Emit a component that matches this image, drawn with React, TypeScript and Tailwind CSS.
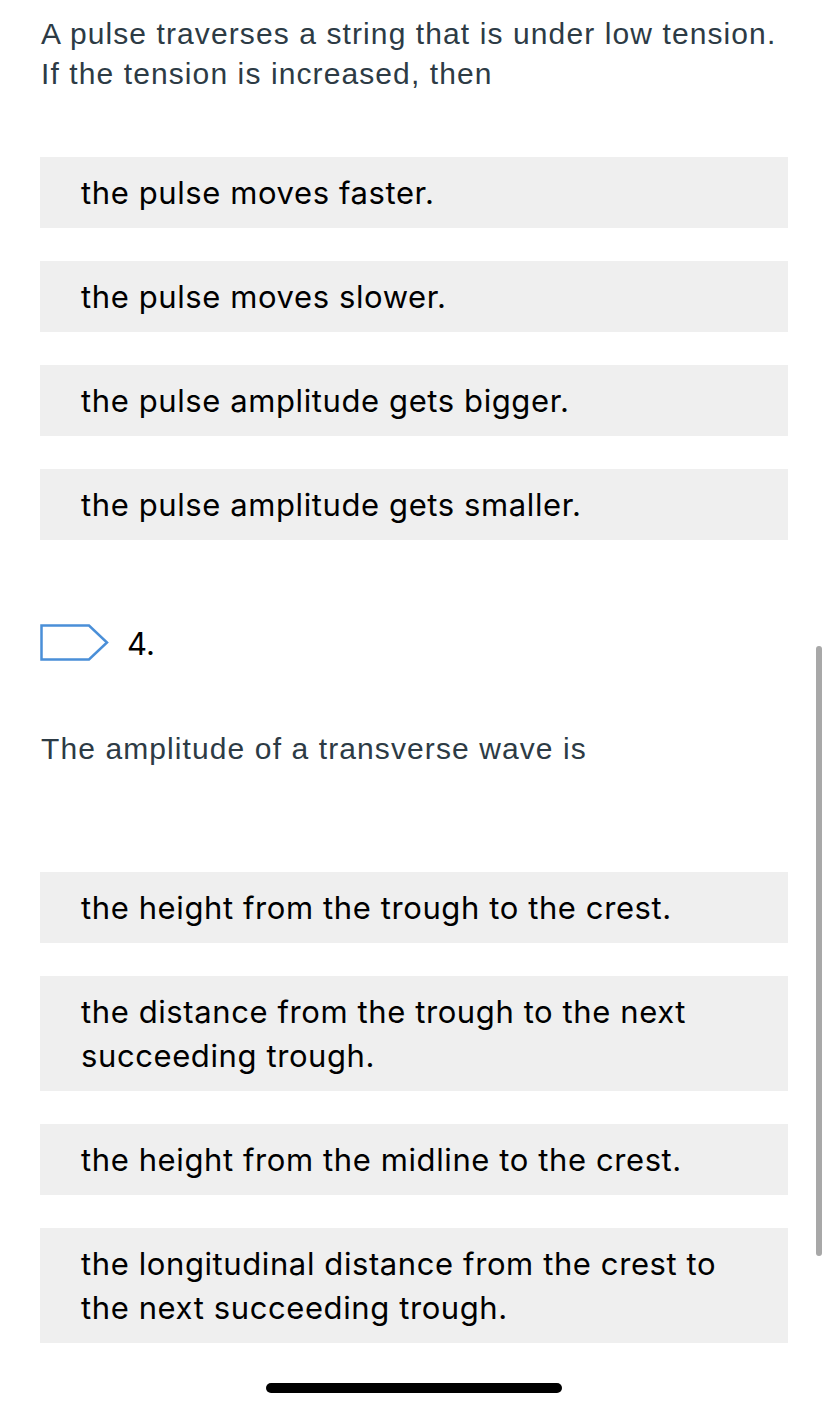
import React from 'react';

type Question = {
    text: string;
    answers: string[];
};

const first: Question = {
    text: 'A pulse traverses a string that is under low tension. If the tension is increased, then',
    answers: [
        'the pulse moves faster.',
        'the pulse moves slower.',
        'the pulse amplitude gets bigger.',
        'the pulse amplitude gets smaller.',
    ],
};

const second: Question = {
    text: 'The amplitude of a transverse wave is',
    answers: [
        'the height from the trough to the crest.',
        'the distance from the trough to the next succeeding trough.',
        'the height from the midline to the crest.',
        'the longitudinal distance from the crest to the next succeeding trough.',
    ],
};

const Answers: React.FC<{ items: string[] }> = ({ items }) => (
    <div className="flex flex-col gap-[33px]">
        {items.map((a) => (
            <div key={a} className="bg-[#efefef] pl-[41px] pr-[50px] pt-[14px] pb-[13px] text-[31px] leading-[44px] text-black font-['Inter',sans-serif] tracking-[0.6px]">
                {a}
            </div>
        ))}
    </div>
);

// outlined flag marker next to the question number
const FlagMarker = () => (
    <svg width="70" height="40" viewBox="0 0 70 40" className="block">
        <path d="M1.5 1.5 H49 L67 18.5 L49 35.5 H1.5 Z" fill="none" stroke="#4a8fd8" strokeWidth="2.5" />
    </svg>
);

export default function App() {
    return (
        <div className="relative w-[828px] h-[1409px] bg-white overflow-hidden">
            <div className="px-[40px]">
                <p className="pt-[14px] pl-[1px] text-[30px] leading-[40px] text-[#2d3b45] font-['Liberation_Sans',sans-serif] tracking-[1.1px]">
                    {first.text}
                </p>
                <div className="mt-[63px]">
                    <Answers items={first.answers} />
                </div>

                <div className="mt-[84px] flex items-center gap-[17px]">
                    <FlagMarker />
                    <span className="text-[31px] leading-[40px] text-black font-['Inter',sans-serif]">4.</span>
                </div>

                <p className="mt-[65px] pl-[1px] text-[30px] leading-[40px] text-[#2d3b45] font-['Liberation_Sans',sans-serif] tracking-[1.1px]">
                    {second.text}
                </p>
                <div className="mt-[103px]">
                    <Answers items={second.answers} />
                </div>
            </div>

            {/* scroll indicator */}
            <div className="absolute left-[816px] top-[646px] w-[6px] h-[610px] rounded-full bg-[#a8a8a8]" />
            {/* home indicator */}
            <div className="absolute left-[266px] top-[1383px] w-[296px] h-[10px] rounded-full bg-black" />
        </div>
    );
}
